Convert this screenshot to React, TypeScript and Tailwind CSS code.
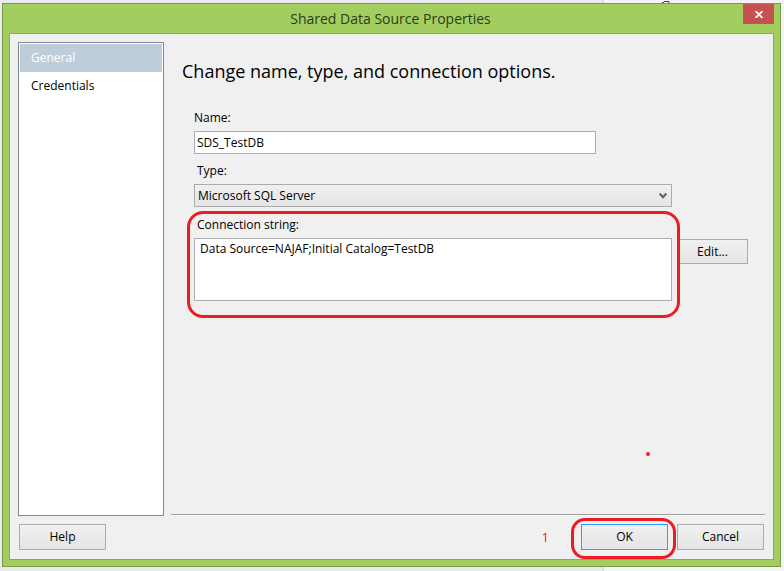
import { useState } from "react";
import type { ComponentProps } from "react";
import { cx } from "class-variance-authority";

const pages = ["General", "Credentials"];

function DialogButton({ className, ...props }: ComponentProps<"button">) {
    return (
        <button
            type="button"
            className={cx(
                "border bg-linear-to-b from-[#f0f0f0] to-[#e5e5e5] text-center",
                className,
            )}
            {...props}
        />
    );
}

// The window behind the dialog, visible only around its edges
function Backdrop() {
    return (
        <div className="absolute inset-0 flex" aria-hidden="true">
            <div className="w-[77%] border-r-2 border-[#dcdce2] bg-[#ebebee]" />
            <div className="flex-1 bg-[#f4f4f6] pl-[58px]">
                <svg width="8" height="3" viewBox="0 0 8 3">
                    <path
                        d="M0 2.5 H2 M2 1.5 H7 V3"
                        fill="none"
                        stroke="#444"
                        strokeWidth="1"
                    />
                </svg>
            </div>
        </div>
    );
}

function TitleBar() {
    return (
        <header className="flex h-[29px] shrink-0">
            <h1 className="flex-1 pl-[35px] text-center text-[14px] leading-[29px] text-[#2c3a1c]">
                Shared Data Source Properties
            </h1>
            <button
                type="button"
                aria-label="Close"
                className="mr-[6px] flex h-5 w-[31px] items-center justify-center bg-[#c75050]"
            >
                <svg width="8" height="7" viewBox="0 0 8 7">
                    <path
                        d="M0.5 0 L7.5 7 M7.5 0 L0.5 7"
                        stroke="#fff"
                        strokeWidth="1.8"
                    />
                </svg>
            </button>
        </header>
    );
}

function Sidebar({
    active,
    onSelect,
}: {
    active: string;
    onSelect: (page: string) => void;
}) {
    return (
        <nav className="flex w-[146px] shrink-0 flex-col border border-[#828790] bg-white p-px">
            {pages.map((page) => (
                <button
                    key={page}
                    type="button"
                    onClick={() => onSelect(page)}
                    className={cx(
                        "h-7 pl-[11px] text-left",
                        page === active && "bg-[#bfcddb] text-white",
                    )}
                >
                    {page}
                </button>
            ))}
        </nav>
    );
}

function GeneralForm() {
    return (
        <form className="flex flex-1 flex-col pl-[11px]">
            <h2 className="pt-4 text-[18px] leading-[26px]">
                Change name, type, and connection options.
            </h2>
            <div className="mt-6 flex flex-col pl-3">
                <label htmlFor="name" className="h-[23px] leading-[20px]">
                    Name:
                </label>
                <input
                    id="name"
                    defaultValue="SDS_TestDB"
                    className="h-[23px] w-[402px] border border-[#abadb3] bg-white px-[2px]"
                />
                <label htmlFor="type" className="h-[30px] pt-2 pl-[3px] leading-[18px]">
                    Type:
                </label>
                <div className="relative w-[478px]">
                    <select
                        id="type"
                        className="block h-[23px] w-full appearance-none border border-[#acacac] bg-linear-to-b from-[#f0f0f0] to-[#e5e5e5] pl-[3px]"
                    >
                        <option>Microsoft SQL Server</option>
                    </select>
                    <svg
                        width="8"
                        height="6"
                        viewBox="0 0 8 6"
                        className="pointer-events-none absolute top-[9px] right-[5px]"
                    >
                        <path
                            d="M0.7 0.5 L4 4.2 L7.3 0.5"
                            fill="none"
                            stroke="#606060"
                            strokeWidth="2"
                        />
                    </svg>
                </div>
                <div className="flex items-start gap-[5px]">
                    <div className="relative flex w-[478px] flex-col">
                        <label
                            htmlFor="connection"
                            className="h-[31px] pt-2 pl-[3px] leading-[20px]"
                        >
                            Connection string:
                        </label>
                        <textarea
                            id="connection"
                            defaultValue="Data Source=NAJAF;Initial Catalog=TestDB"
                            className="h-[63px] resize-none border border-[#abadb3] bg-white px-[5px] py-[2px] leading-[16px]"
                        />
                        <div className="pointer-events-none absolute top-1 -right-2 -bottom-[17px] -left-[7px] z-10 rounded-[16px] border-3 border-[#ed1c24]" />
                    </div>
                    <DialogButton className="mt-8 h-[25px] w-[71px] border-[#acacac]">
                        Edit...
                    </DialogButton>
                </div>
            </div>
            <div className="mt-auto mr-[115px] mb-[58px] size-1 self-end rounded-full bg-[#ed1c24]" />
        </form>
    );
}

function Footer() {
    return (
        <footer className="flex items-center px-px pt-2">
            <DialogButton className="h-[26px] w-[87px] border-[#acacac]">
                Help
            </DialogButton>
            <span className="mr-8 ml-auto text-[13px] leading-[16px] text-[#ed1c24]">
                1
            </span>
            <div className="relative">
                <DialogButton className="block h-[26px] w-[87px] border-[#3399ff]">
                    OK
                </DialogButton>
                <div className="pointer-events-none absolute -top-[6px] -right-2 -bottom-[9px] -left-[10px] z-10 rounded-[14px] border-3 border-[#ed1c24]" />
            </div>
            <DialogButton className="ml-[9px] h-[26px] w-[87px] border-[#acacac]">
                Cancel
            </DialogButton>
        </footer>
    );
}

export default function App() {
    const [active, setActive] = useState("General");

    return (
        <div className="relative flex min-h-screen flex-col pt-[3px] pr-[3px] pb-1 pl-[2px] font-['Open_Sans',sans-serif] text-[12px] text-black">
            <Backdrop />
            <main className="relative flex flex-1 flex-col border border-[#7a9a48] bg-[#a2ce5f]">
                <TitleBar />
                <div className="mx-[6px] mb-[6px] flex flex-1 flex-col border border-[#8bab52] bg-[#f0f0f0] p-2 pb-[9px]">
                    <div className="flex flex-1 gap-[7px]">
                        <Sidebar active={active} onSelect={setActive} />
                        <div className="flex flex-1 flex-col border-b border-white">
                            <div className="flex flex-1 flex-col border-b border-[#a0a0a0]">
                                <GeneralForm />
                            </div>
                        </div>
                    </div>
                    <Footer />
                </div>
            </main>
        </div>
    );
}
